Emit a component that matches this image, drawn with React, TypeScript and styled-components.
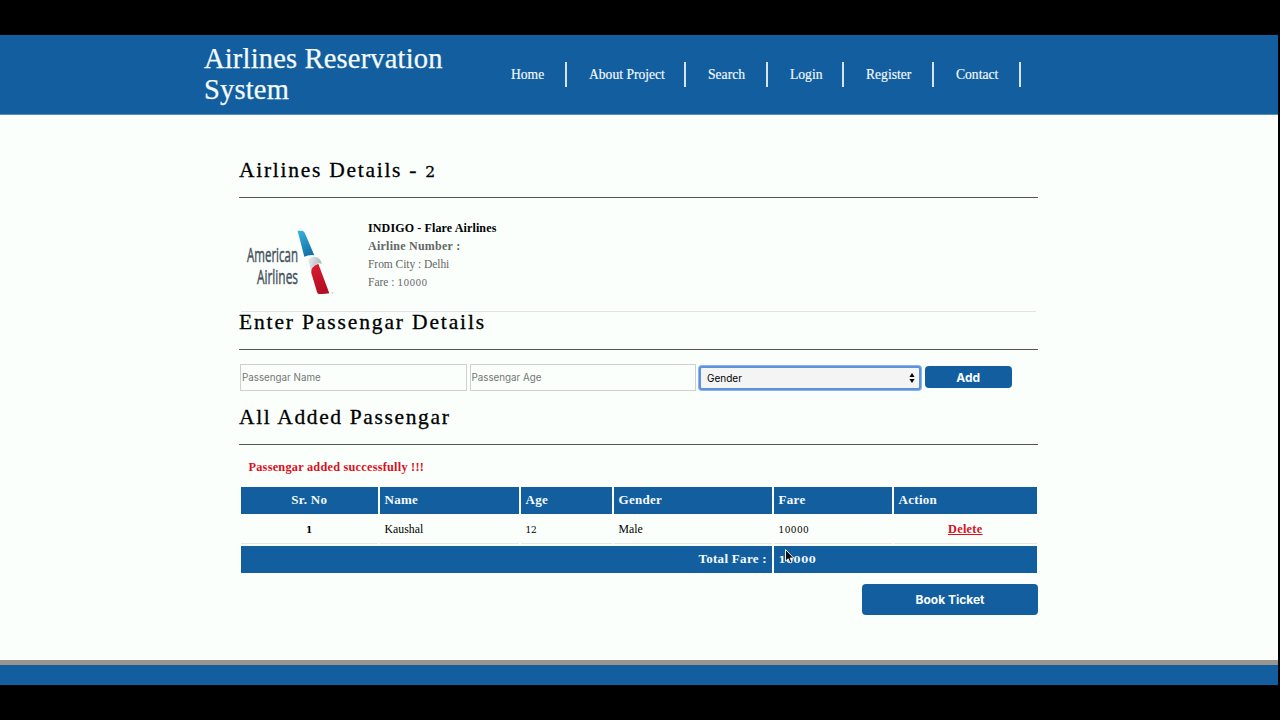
import React from "react";
import styled, { createGlobalStyle } from "styled-components";

const blue = "#135e9e";
const serif = `"Liberation Serif", "Times New Roman", serif`;
const sans = `Inter, "Liberation Sans", sans-serif`;

const GlobalStyle = createGlobalStyle`
  * { box-sizing: border-box; }
  body { margin: 0; background: #000; overflow: hidden; }
`;

const Screen = styled.div`
  width: 1280px;
  height: 720px;
  padding: 35px 2px 35px 0;
  background: #000;
  font-family: ${serif};
  color: #000;
  position: relative;
`;

const Page = styled.div`
  height: 650px;
  display: flex;
  flex-direction: column;
  background: #fafffc;
`;

const Header = styled.header`
  height: 80px;
  flex: none;
  display: flex;
  padding-left: 204px;
  background: ${blue};
  border-bottom: 1px solid #5b8fb9;
  color: #f4fbff;
`;

const Brand = styled.h1`
  width: 285px;
  margin: 0;
  padding-top: 9px;
  font-size: 28.5px;
  line-height: 30.5px;
  font-weight: 400;
  letter-spacing: 0.18px;
  -webkit-text-stroke: 0.25px #f4fbff;
`;

const Nav = styled.nav`
  display: flex;
  padding-top: 27px;
`;

const NavItem = styled.a<{ $w: number }>`
  width: ${(p) => p.$w}px;
  height: 25px;
  padding-left: 22px;
  border-right: 2px solid #d5e4f0;
  font-size: 13.6px;
  line-height: 25px;
  white-space: nowrap;
  -webkit-text-stroke: 0.15px #f4fbff;
`;

const Main = styled.main`
  flex: 1;
  width: 799px;
  margin-left: 239px;
  display: flex;
  flex-direction: column;
`;

const Heading = styled.h2<{ $top: number; $ls: number }>`
  flex: none;
  margin: ${(p) => p.$top}px 0 0;
  height: 42px;
  border-bottom: 1px solid #555;
  font-size: 21.5px;
  line-height: 28px;
  font-weight: 400;
  letter-spacing: ${(p) => p.$ls}px;
  -webkit-text-stroke: 0.3px #000;
`;

const Digits = styled.span<{ $size: number; $ls: number }>`
  font-family: "DejaVu Serif", serif;
  font-size: ${(p) => p.$size}px;
  letter-spacing: ${(p) => p.$ls}px;
  line-height: 1;
`;

const Airline = styled.section`
  height: 114px;
  flex: none;
  margin: 0 2px;
  display: flex;
  border-bottom: 1px solid #dfe4e1;
`;

const LogoBox = styled.div`
  width: 127px;
  padding: 30px 0 0 4px;
`;

const Facts = styled.div`
  padding-top: 21px;
`;

const Fact = styled.div<{ $bold?: boolean; $ls: number; $color?: string }>`
  height: 18px;
  line-height: 18px;
  font-size: ${(p) => (p.$bold ? 12 : 11.5)}px;
  font-weight: ${(p) => (p.$bold ? 700 : 400)};
  letter-spacing: ${(p) => p.$ls}px;
  color: ${(p) => p.$color ?? "#666"};
`;

const Form = styled.form`
  display: flex;
  height: 53px;
  flex: none;
  padding: 14px 0 0 1px;
  font-family: ${sans};
`;

const Field = styled.input`
  width: 226.5px;
  height: 27px;
  margin-right: 3px;
  padding: 0 0 0 1px;
  border: 1px solid #cdd1cf;
  border-radius: 0;
  background: transparent;
  font: 400 9.8px ${sans};
  outline: none;
  &::placeholder { color: #757575; opacity: 1; }
`;

const SelectBox = styled.div`
  width: 222px;
  height: 24px;
  margin: 2px 3.5px 0 0;
  padding: 0 4px 0 6px;
  display: flex;
  align-items: center;
  justify-content: space-between;
  border: 2px solid #5f92dd;
  border-radius: 3px;
  box-shadow: 0 0 0 1px #8db1ea;
  background: #f3f4f3;
  font-size: 10px;
`;

const Button = styled.button<{ $w: number; $h: number; $size: number }>`
  width: ${(p) => p.$w}px;
  height: ${(p) => p.$h}px;
  padding: 0;
  border: 0;
  border-radius: 4px;
  background: ${blue};
  color: #f8fdff;
  font: 700 ${(p) => p.$size}px ${sans};
`;

const AddSlot = styled.div`
  display: flex;
  align-items: flex-start;
  padding-top: 2px;
`;

const Message = styled.p`
  margin: 0;
  height: 42px;
  flex: none;
  padding: 14px 0 0 9.5px;
  color: #d8101c;
  font-size: 12.3px;
  line-height: 17px;
  font-weight: 700;
  letter-spacing: 0.23px;
`;

const Table = styled.div`
  margin-left: 2px;
  display: grid;
  flex: none;
  grid-template-columns: 137px 139px 91px 158px 118px 143px;
  grid-template-rows: 27px 28px 27px;
  gap: 2px;
`;

const Cell = styled.div<{ $align?: string; $span?: number; $bold?: boolean }>`
  grid-column: span ${(p) => p.$span ?? 1};
  padding: 0 5px 0 4.5px;
  line-height: 26px;
  text-align: ${(p) => p.$align ?? "left"};
`;

const HeadCell = styled(Cell)`
  background: ${blue};
  color: #f4fbff;
  font-size: 13px;
  font-weight: 700;
  letter-spacing: 0.3px;
`;

const BodyCell = styled(Cell)`
  border-bottom: 1px solid #e3e8e5;
  line-height: 27px;
  font-size: 11.8px;
  font-weight: ${(p) => (p.$bold ? 700 : 400)};
`;

const Delete = styled.a`
  color: #d8101c;
  font-size: 12.3px;
  font-weight: 700;
  letter-spacing: 0.3px;
  text-decoration: underline;
`;

const Actions = styled.div`
  display: flex;
  justify-content: flex-end;
  padding-top: 11px;
`;

const Footer = styled.footer`
  height: 25px;
  flex: none;
  border-top: 5px solid #9b9590;
  background: ${blue};
`;

const Pointer = styled.svg`
  position: absolute;
  left: 784px;
  top: 548px;
`;

const navItems: [string, number][] = [
  ["Home", 78],
  ["About Project", 119],
  ["Search", 82],
  ["Login", 76],
  ["Register", 90],
  ["Contact", 87],
];

const AirlineLogo = () => (
  <svg width="92" height="72" viewBox="245 228 92 72">
    <defs>
      <linearGradient id="tailBlue" x1="0" y1="0" x2="0.4" y2="1">
        <stop offset="0" stopColor="#35b4e0" />
        <stop offset="1" stopColor="#1672aa" />
      </linearGradient>
      <linearGradient id="tailRed" x1="0" y1="0" x2="0.3" y2="1">
        <stop offset="0" stopColor="#dc1c30" />
        <stop offset="1" stopColor="#b40f24" />
      </linearGradient>
      <linearGradient id="eagle" x1="0" y1="0" x2="1" y2="0.3">
        <stop offset="0" stopColor="#e9edef" />
        <stop offset="1" stopColor="#aeb7bc" />
      </linearGradient>
    </defs>
    <g fill="#47525d" stroke="#47525d" strokeWidth="0.5" fontFamily="Open Sans, Noto Sans, sans-serif" fontSize="20.5">
      <text x="247" y="262.3" textLength="51" lengthAdjust="spacingAndGlyphs">American</text>
      <text x="257" y="283.5" textLength="41" lengthAdjust="spacingAndGlyphs">Airlines</text>
    </g>
    <path d="M297.6 230.7H302Q304 231 304.8 233L314.3 255.2Q309 254.4 304.3 256.7Z" fill="url(#tailBlue)" />
    <path d="M308 259.5Q311 256.2 316 257Q321 258.3 321.8 264.5Q318.5 261.8 314.8 265.5Q311.5 268.5 312 273Z" fill="url(#eagle)" />
    <path d="M318.3 263.8L329.3 293.3Q324 294.4 319 294Q317.5 293.8 317 292L311.3 273Q310.5 267 318.3 263.8Z" fill="url(#tailRed)" />
    <circle cx="332.5" cy="293" r="0.8" fill="#bbb" />
  </svg>
);

export default function App() {
  return (
    <>
      <GlobalStyle />
      <Screen>
        <Page>
          <Header>
            <Brand>
              Airlines Reservation
              <br />
              System
            </Brand>
            <Nav>
              {navItems.map(([label, w]) => (
                <NavItem key={label} $w={w}>
                  {label}
                </NavItem>
              ))}
            </Nav>
          </Header>
          <Main>
            <Heading $top={41} $ls={1.73}>
              Airlines Details - <Digits $size={15.5} $ls={0}>2</Digits>
            </Heading>
            <Airline>
              <LogoBox>
                <AirlineLogo />
              </LogoBox>
              <Facts>
                <Fact $bold $ls={0.13} $color="#000">INDIGO - Flare Airlines</Fact>
                <Fact $bold $ls={0.25}>Airline Number :</Fact>
                <Fact $ls={-0.05}>From City : Delhi</Fact>
                <Fact $ls={0}>
                  Fare : <Digits $size={9} $ls={0.3}>10000</Digits>
                </Fact>
              </Facts>
            </Airline>
            <Heading $top={-4} $ls={1.86}>Enter Passengar Details</Heading>
            <Form>
              <Field placeholder="Passengar Name" />
              <Field placeholder="Passengar Age" />
              <SelectBox>
                Gender
                <svg width="6" height="10" viewBox="0 0 6 10">
                  <path d="M3 0L5.6 4H0.4ZM3 10L0.4 6H5.6Z" fill="#000" />
                </svg>
              </SelectBox>
              <AddSlot>
                <Button type="button" $w={87.5} $h={22} $size={12}>Add</Button>
              </AddSlot>
            </Form>
            <Heading $top={0} $ls={1.64}>All Added Passengar</Heading>
            <Message>Passengar added successfully !!!</Message>
            <Table>
              <HeadCell $align="center">Sr. No</HeadCell>
              <HeadCell>Name</HeadCell>
              <HeadCell>Age</HeadCell>
              <HeadCell>Gender</HeadCell>
              <HeadCell>Fare</HeadCell>
              <HeadCell>Action</HeadCell>
              <BodyCell $align="center" $bold>
                <Digits $size={9} $ls={0}>1</Digits>
              </BodyCell>
              <BodyCell>Kaushal</BodyCell>
              <BodyCell>
                <Digits $size={9} $ls={-0.2}>12</Digits>
              </BodyCell>
              <BodyCell>Male</BodyCell>
              <BodyCell>
                <Digits $size={9} $ls={0.4}>10000</Digits>
              </BodyCell>
              <BodyCell $align="center">
                <Delete>Delete</Delete>
              </BodyCell>
              <HeadCell $span={4} $align="right">Total Fare :</HeadCell>
              <HeadCell $span={2}>
                <Digits $size={10} $ls={0.6}>10000</Digits>
              </HeadCell>
            </Table>
            <Actions>
              <Button type="button" $w={176} $h={31} $size={12}>Book Ticket</Button>
            </Actions>
          </Main>
          <Footer />
        </Page>
        <Pointer width="12" height="18" viewBox="0 0 12 18">
          <path d="M1.5 1.5V13.2L4.2 10.8L6 15L8 14.2L6.2 10.1H9.8Z" fill="#111" stroke="#e6edf2" strokeWidth="1" />
        </Pointer>
      </Screen>
    </>
  );
}
